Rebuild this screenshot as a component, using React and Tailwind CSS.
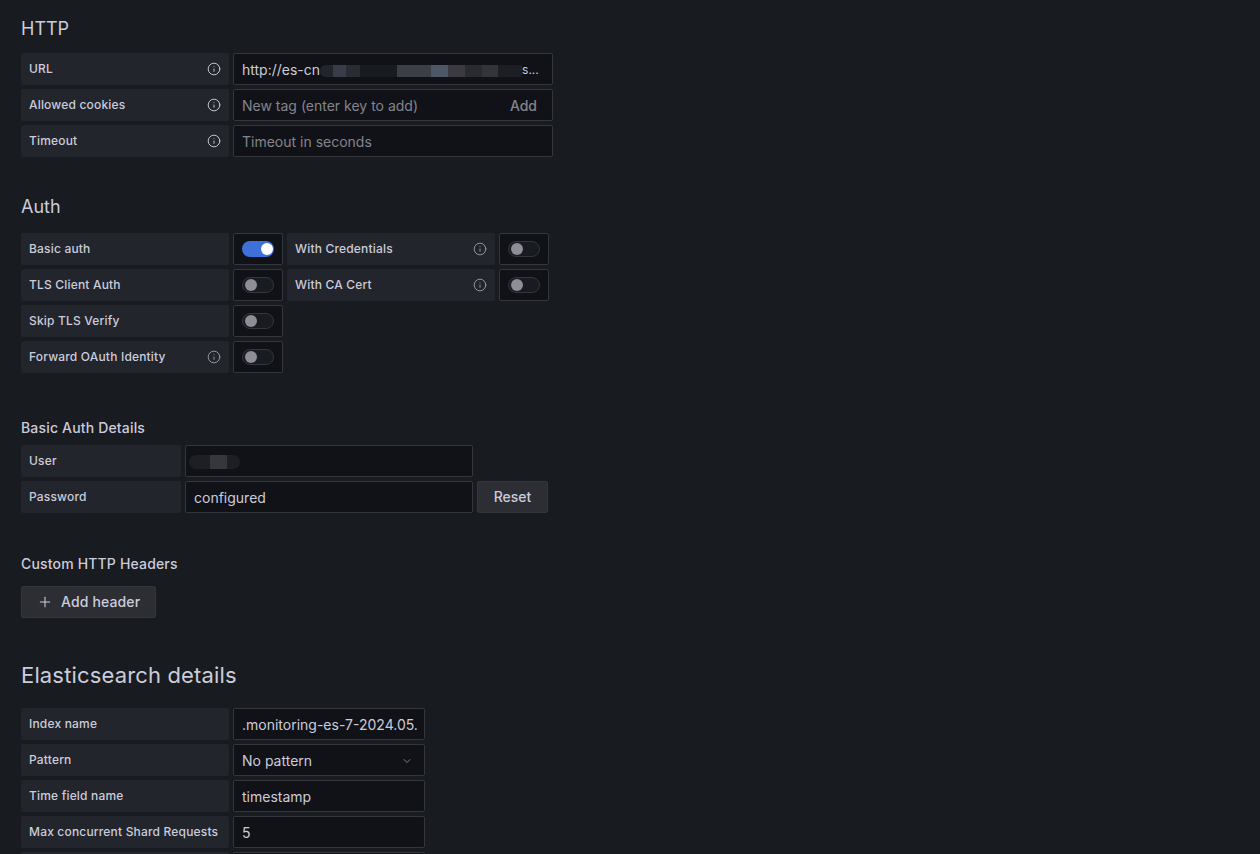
import { Info, Plus, ChevronDown } from "lucide-react";

const inputBox = "flex h-8 items-center rounded-[2px] border border-[#34363b] bg-[#111217] px-2 pt-[1px] text-sm text-[#ccccdc]";

function FieldLabel({ children, width = "w-[208px]", info, dim }) {
  return (
    <div className={`flex h-8 shrink-0 items-center justify-between rounded-[2px] bg-[#22252b] px-2 pb-[1px] text-xs font-medium tracking-[0.015em] text-[#ccccdc] ${width}`}>
      <span>{children}</span>
      {info && <Info size={14} strokeWidth={1.6} className={dim ? "text-[#9a9ba6]" : "text-[#ccccdc]"} />}
    </div>
  );
}

function Toggle({ on }) {
  return (
    <div className="flex h-8 w-[50px] shrink-0 items-center justify-center rounded-[2px] border border-[#34363b] bg-[#111217]">
      {on ? (
        <div className="flex h-4 w-8 items-center justify-end rounded-full bg-[#3d71d9] pr-[1px]">
          <div className="h-3 w-3 rounded-full bg-white" />
        </div>
      ) : (
        <div className="flex h-4 w-8 items-center rounded-full border border-[#34363b] bg-[#181b1f] pl-[2px]">
          <div className="h-3 w-3 rounded-full bg-[#8e8e98]" />
        </div>
      )}
    </div>
  );
}

function Blur({ w, color }) {
  return <div className={`h-[12px] shrink-0 ${w} ${color}`} />;
}

export default function App() {
  return (
    <div className="h-[854px] overflow-hidden bg-[#181b1f] pl-[21px] text-[#ccccdc]" style={{ fontFamily: "Inter, sans-serif" }}>
      {/* HTTP */}
      <h3 className="pt-[16px] text-lg leading-[26px] font-normal">HTTP</h3>
      <div className="mt-[11px] flex flex-col gap-1">
        <div className="flex gap-1">
          <FieldLabel info>URL</FieldLabel>
          <div className={`${inputBox} w-[320px]`}>
            <span className="shrink-0">http://es-cn</span>
            <div className="mt-[2px] flex flex-1 items-center">
              <Blur w="w-[13px] rounded-l-full" color="bg-[#22252b]" />
              <Blur w="w-[13px]" color="bg-[#3a3d48]" />
              <Blur w="w-[14px]" color="bg-[#2a2c33]" />
              <Blur w="w-[37px]" color="bg-[#181b1f]" />
              <Blur w="w-[34px]" color="bg-[#3c3f46]" />
              <Blur w="w-[17px]" color="bg-[#4e5765]" />
              <Blur w="w-[17px]" color="bg-[#3a3a40]" />
              <Blur w="w-[17px]" color="bg-[#2a2b30]" />
              <Blur w="w-[16px]" color="bg-[#33343a]" />
              <Blur w="w-[24px]" color="bg-[#1c1e23]" />
            </div>
            <span className="mr-[6px] shrink-0 text-xs">s...</span>
          </div>
        </div>
        <div className="flex gap-1">
          <FieldLabel info>Allowed cookies</FieldLabel>
          <div className={`${inputBox} w-[320px] justify-between pr-[15px]`}>
            <span className="text-[#83848e]">New tag (enter key to add)</span>
            <span className="font-medium text-[#83848e]">Add</span>
          </div>
        </div>
        <div className="flex gap-1">
          <FieldLabel info>Timeout</FieldLabel>
          <div className={`${inputBox} w-[320px]`}>
            <span className="text-[#83848e]">Timeout in seconds</span>
          </div>
        </div>
      </div>

      {/* Auth */}
      <h3 className="mt-[37px] text-lg leading-[26px] font-normal">Auth</h3>
      <div className="mt-[13px] flex flex-col gap-1">
        <div className="flex gap-1">
          <FieldLabel>Basic auth</FieldLabel>
          <Toggle on />
          <FieldLabel info dim>With Credentials</FieldLabel>
          <Toggle />
        </div>
        <div className="flex gap-1">
          <FieldLabel>TLS Client Auth</FieldLabel>
          <Toggle />
          <FieldLabel info dim>With CA Cert</FieldLabel>
          <Toggle />
        </div>
        <div className="flex gap-1">
          <FieldLabel>Skip TLS Verify</FieldLabel>
          <Toggle />
        </div>
        <div className="flex gap-1">
          <FieldLabel info dim>Forward OAuth Identity</FieldLabel>
          <Toggle />
        </div>
      </div>

      {/* Basic auth details */}
      <h6 className="mt-[44px] text-sm leading-[22px] font-medium tracking-[0.012em]">Basic Auth Details</h6>
      <div className="mt-[6px] flex flex-col gap-1">
        <div className="flex gap-1">
          <FieldLabel width="w-[160px]">User</FieldLabel>
          <div className={`${inputBox} w-[288px] pl-[3px]`}>
            <div className="flex items-center">
              <div className="h-[14px] w-[21px] rounded-l-full bg-[#1d1f24]" />
              <div className="h-[14px] w-[17px] bg-[#36373c]" />
              <div className="h-[14px] w-[13px] rounded-r-full bg-[#1d1f24]" />
            </div>
          </div>
        </div>
        <div className="flex gap-1">
          <FieldLabel width="w-[160px]">Password</FieldLabel>
          <div className={`${inputBox} w-[288px]`}>configured</div>
          <button className="h-8 w-[71px] rounded-[2px] border border-[#34363b] bg-[#2c2e33] text-sm font-medium text-[#ccccdc]">Reset</button>
        </div>
      </div>

      {/* Custom headers */}
      <h6 className="mt-[40px] text-sm leading-[22px] font-medium tracking-[0.012em]">Custom HTTP Headers</h6>
      <button className="mt-[11px] flex h-8 items-center gap-2 rounded-[2px] border border-[#34363b] bg-[#2c2e33] px-[15px] text-sm font-medium tracking-[0.01em] text-[#ccccdc]">
        <Plus size={16} strokeWidth={1.6} />
        Add header
      </button>

      {/* Elasticsearch */}
      <h2 className="mt-[42px] text-[22px] leading-[30px] font-normal tracking-[0.007em]">Elasticsearch details</h2>
      <div className="mt-[18px] flex flex-col gap-1">
        <div className="flex gap-1">
          <FieldLabel>Index name</FieldLabel>
          <div className={`${inputBox} w-[192px] overflow-hidden whitespace-nowrap`}>.monitoring-es-7-2024.05.</div>
        </div>
        <div className="flex gap-1">
          <FieldLabel>Pattern</FieldLabel>
          <div className={`${inputBox} w-[192px] justify-between`}>
            No pattern
            <ChevronDown size={12} strokeWidth={1.6} className="mr-[3px] text-[#9a9ba6]" />
          </div>
        </div>
        <div className="flex gap-1">
          <FieldLabel>Time field name</FieldLabel>
          <div className={`${inputBox} w-[192px]`}>timestamp</div>
        </div>
        <div className="flex gap-1">
          <FieldLabel>Max concurrent Shard Requests</FieldLabel>
          <div className={`${inputBox} w-[192px]`}>5</div>
        </div>
        <div className="flex gap-1">
          <FieldLabel> </FieldLabel>
          <div className={`${inputBox} w-[192px]`} />
        </div>
      </div>
    </div>
  );
}
